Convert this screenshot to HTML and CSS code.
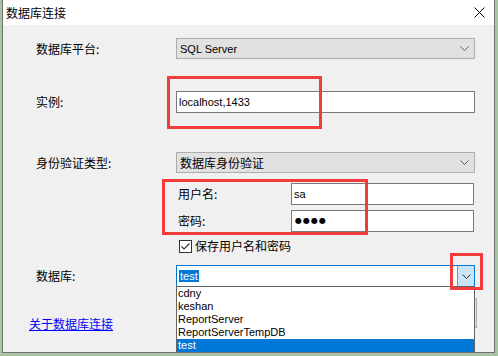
FILE: index.html
```html
<!doctype html>
<html>
<head>
  <meta charset="utf-8"/>
  <title>数据库连接</title>
  <link rel="stylesheet" href="styles.css">
</head>
<body>
<div class="dialog">
  <div class="titlebar">
    <span class="title">数据库连接</span>
    <svg class="close" width="11" height="11" viewBox="0 0 11 11">
      <path d="M0.5 0.5 L10.5 10.5 M10.5 0.5 L0.5 10.5" stroke="#000" stroke-width="1" fill="none"/>
    </svg>
  </div>
  <div class="content">
    <div class="row row-platform">
      <span class="label">数据库平台:</span>
      <div class="combo">
        <span class="combo-text">SQL Server</span>
        <svg class="chevron" width="9" height="5" viewBox="0 0 9 5"><path d="M0.5 0.5 L4.5 4.5 L8.5 0.5" stroke="#606060" fill="none"/></svg>
      </div>
    </div>
    <div class="row row-instance">
      <span class="label">实例:</span>
      <div class="textbox">localhost,1433</div>
    </div>
    <div class="row row-auth">
      <span class="label">身份验证类型:</span>
      <div class="combo">
        <span class="combo-text">数据库身份验证</span>
        <svg class="chevron" width="9" height="5" viewBox="0 0 9 5"><path d="M0.5 0.5 L4.5 4.5 L8.5 0.5" stroke="#606060" fill="none"/></svg>
      </div>
    </div>
    <div class="credentials">
      <div class="cred-row cred-user">
        <span class="cred-label">用户名:</span>
        <div class="textbox short">sa</div>
      </div>
      <div class="cred-row cred-pass">
        <span class="cred-label">密码:</span>
        <div class="textbox short password">●●●●</div>
      </div>
      <div class="remember">
        <svg class="checkbox" width="13" height="13" viewBox="0 0 13 13">
          <rect x="0.5" y="0.5" width="12" height="12" fill="#fff" stroke="#333"/>
          <path d="M2.5 6.5 L5 9 L10.5 3.5" stroke="#333" stroke-width="1.2" fill="none"/>
        </svg>
        <span>保存用户名和密码</span>
      </div>
    </div>
    <div class="row row-database">
      <span class="label">数据库:</span>
      <div class="combo combo-edit">
        <span class="combo-text"><span class="selected">test</span></span>
        <span class="drop-btn">
          <svg class="chevron" width="9" height="5" viewBox="0 0 9 5"><path d="M0.5 0.5 L4.5 4.5 L8.5 0.5" stroke="#333" fill="none"/></svg>
        </span>
        <ul class="droplist">
          <li>cdny</li>
          <li>keshan</li>
          <li>ReportServer</li>
          <li>ReportServerTempDB</li>
          <li class="active">test</li>
        </ul>
      </div>
    </div>
    <div class="footer">
      <a class="about" href="#">关于数据库连接</a>
      <span class="ok-btn">确定</span>
    </div>
  </div>
</div>
<!-- annotation boxes -->
<span class="mark mark-instance"></span>
<span class="mark mark-cred"></span>
<span class="mark mark-drop"></span>
</body>
</html>
```

FILE: styles.css
```css
html, body {
  margin: 0;
}
body {
  width: 498px;
  height: 356px;
  overflow: hidden;
  position: relative;
  background: #a8c4a2;
  font-family: "Liberation Sans", "Noto Sans CJK SC", sans-serif;
  font-size: 11px;
  color: #000;
}
.dialog {
  box-sizing: border-box;
  margin-left: 2px;
  width: 493px;
  height: 353px;
  background: #f0f0f0;
  border: 1px solid #707070;
  border-top: none;
  display: flex;
  flex-direction: column;
}
.titlebar {
  height: 25px;
  background: #fff;
  display: flex;
  align-items: center;
  justify-content: space-between;
  padding: 0 9px 0 3px;
}
.title, .label, .cred-label, .remember, .about, .row-auth .combo-text {
  font-family: "Noto Sans CJK SC", sans-serif;
  font-size: 12px;
}
.title {
  line-height: 16px;
}
.content {
  padding: 0 19px 0 33px;
  display: flex;
  flex-direction: column;
}
.row {
  display: flex;
  align-items: center;
}
.label {
  width: 140px;
  line-height: 16px;
}
.row-platform { margin-top: 13px; }
.row-instance { margin-top: 32px; }
.row-auth { margin-top: 39px; }
.row-database { margin-top: 11px; }

.combo {
  box-sizing: border-box;
  position: relative;
  width: 299px;
  height: 21px;
  background: #e1e1e1;
  border: 1px solid #adadad;
  display: flex;
  align-items: center;
  justify-content: space-between;
  padding: 0 5px 0 3px;
}
.combo-text {
  line-height: 16px;
  white-space: nowrap;
}
.textbox {
  box-sizing: border-box;
  width: 299px;
  height: 22px;
  background: #fff;
  border: 1px solid #7a7a7a;
  padding: 0 2px;
  line-height: 20px;
  white-space: nowrap;
}
.textbox.short {
  width: 183px;
}
.password {
  font-family: "DejaVu Sans", sans-serif;
  font-size: 8px;
  letter-spacing: 1px;
  padding-left: 3px;
}

.credentials {
  margin-left: 142px;
  display: flex;
  flex-direction: column;
}
.cred-row {
  display: flex;
  align-items: center;
}
.cred-user { margin-top: 10px; }
.cred-pass { margin-top: 5px; }
.cred-label {
  width: 113px;
  line-height: 16px;
}
.remember {
  margin-top: 6px;
  margin-left: 1px;
  display: flex;
  align-items: center;
  gap: 3px;
  line-height: 16px;
}
.checkbox {
  display: block;
}

.combo-edit {
  height: 22px;
  background: #fff;
  border-color: #0078d7;
  padding: 0 0 0 2px;
}
.selected {
  background: #0078d7;
  color: #fff;
  padding: 0 1px;
}
.drop-btn {
  box-sizing: border-box;
  width: 17px;
  height: 20px;
  background: #cce4f7;
  border-left: 1px solid #569de5;
  display: flex;
  align-items: center;
  justify-content: center;
}
.droplist {
  position: absolute;
  top: 100%;
  left: -1px;
  box-sizing: border-box;
  width: 299px;
  margin: 0;
  padding: 0;
  list-style: none;
  background: #fff;
  border: 1px solid #646464;
  border-bottom: none;
}
.droplist li {
  height: 13px;
  line-height: 13px;
  padding-left: 1px;
}
.droplist .active {
  background: #0078d7;
  color: #fff;
}

.footer {
  margin-top: 11px;
  margin-left: -7px;
  display: flex;
  justify-content: space-between;
  align-items: flex-start;
}
.about {
  margin-top: 18px;
  line-height: 16px;
  color: #0000ff;
}
.ok-btn {
  box-sizing: border-box;
  width: 75px;
  height: 30px;
  margin-right: -2px;
  background: #e1e1e1;
  border: 1px solid #adadad;
  font-family: "Noto Sans CJK SC", sans-serif;
  display: flex;
  align-items: center;
  justify-content: center;
}

.mark {
  position: absolute;
  box-sizing: border-box;
  border: 3px solid #f23c3c;
}
.mark-instance {
  left: 167px;
  top: 76px;
  width: 155px;
  height: 53px;
}
.mark-cred {
  left: 162px;
  top: 179px;
  width: 206px;
  height: 56px;
}
.mark-drop {
  left: 450px;
  top: 253px;
  width: 33px;
  height: 37px;
}
```
